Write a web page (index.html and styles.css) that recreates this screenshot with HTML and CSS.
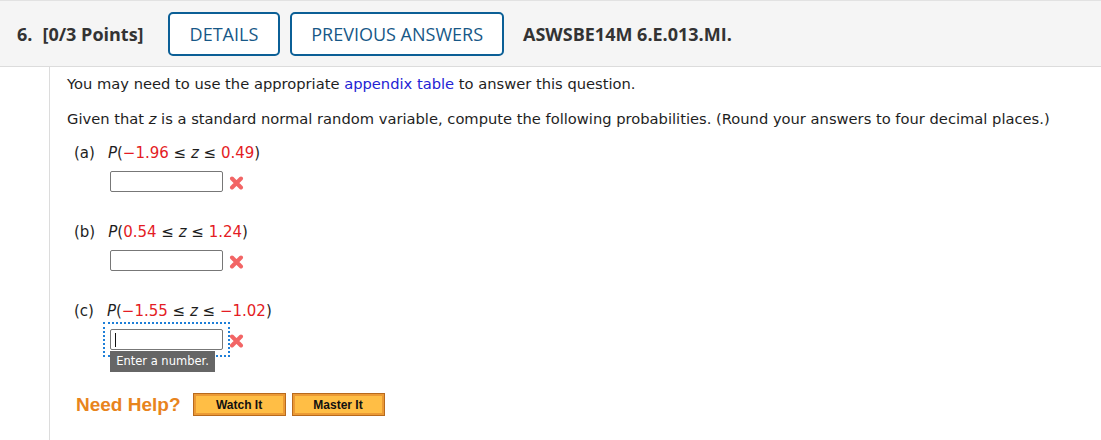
FILE: index.html
```html
<!DOCTYPE html>
<html lang="en">
<head>
    <meta charset="UTF-8">
    <meta name="viewport" content="width=device-width, initial-scale=1.0">
    <link rel="stylesheet" href="styles.css">
    <title>Question 6</title>
</head>
<body>
    <div class="question">
        <div class="qHeader">
            <span class="qNum">6.</span>
            <span class="qPoints">[0/3 Points]</span>
            <button class="tabBtn">DETAILS</button>
            <button class="tabBtn tabWide">PREVIOUS ANSWERS</button>
            <span class="qId">ASWSBE14M 6.E.013.MI.</span>
        </div>

        <div class="qBody">
            <p>You may need to use the appropriate <a href="#">appendix table</a> to answer this question.</p>
            <p>Given that <i>z</i> is a standard normal random variable, compute the following probabilities. (Round your answers to four decimal places.)</p>

            <!-- cast (a) -->
            <div class="part">
                <div class="partLabel"><span class="letter">(a)</span><i>P</i>(<span class="num">&minus;1.96</span> &le; <i>z</i> &le; <span class="num">0.49</span>)</div>
                <div class="answerRow">
                    <input type="text" class="answer">
                    <svg class="wrong" width="15" height="14" viewBox="0 0 15 14"><path d="M3 2.5 L12 11.5 M12 2.5 L3 11.5" /></svg>
                </div>
            </div>

            <!-- cast (b) -->
            <div class="part">
                <div class="partLabel"><span class="letter">(b)</span><i>P</i>(<span class="num">0.54</span> &le; <i>z</i> &le; <span class="num">1.24</span>)</div>
                <div class="answerRow">
                    <input type="text" class="answer">
                    <svg class="wrong" width="15" height="14" viewBox="0 0 15 14"><path d="M3 2.5 L12 11.5 M12 2.5 L3 11.5" /></svg>
                </div>
            </div>

            <!-- cast (c) -->
            <div class="part">
                <div class="partLabel"><span class="letter">(c)</span><i>P</i>(<span class="num">&minus;1.55</span> &le; <i>z</i> &le; <span class="num">&minus;1.02</span>)</div>
                <div class="answerRow">
                    <div class="focusWrap">
                        <input type="text" class="answer">
                        <span class="caret"></span>
                        <div class="tip">Enter a number.</div>
                    </div>
                    <svg class="wrong" width="15" height="14" viewBox="0 0 15 14"><path d="M3 2.5 L12 11.5 M12 2.5 L3 11.5" /></svg>
                </div>
            </div>

            <div class="help">
                <span class="helpText">Need Help?</span>
                <button class="helpBtn">Watch It</button>
                <button class="helpBtn">Master It</button>
            </div>
        </div>
    </div>
</body>
</html>
```

FILE: styles.css
```css
body {
    margin: 0;
    background-color: white;
    color: #1e1e1e;
    font-family: "DejaVu Sans", Verdana, sans-serif;
}

.question {
    border-top: 1px solid #e2e2e2;
    height: 439px;
}

.qHeader {
    display: flex;
    align-items: center;
    height: 65px;
    padding: 0 0 0 17px;
    background-color: #f5f5f5;
    border-bottom: 1px solid #dcdcdc;
    font-family: "Open Sans", sans-serif;
    font-size: 18px;
    color: #333;
}
.qNum {
    font-weight: 700;
    margin-right: 10px;
}
.qPoints {
    font-weight: 700;
    margin-right: 24px;
}
.tabBtn {
    height: 44px;
    padding: 0 20px;
    margin-right: 10px;
    background-color: white;
    border: 2px solid #0b5f96;
    border-radius: 5px;
    color: #175887;
    font-family: "Open Sans", sans-serif;
    font-size: 18px;
}
.tabWide {
    padding: 0 19px;
}
.qId {
    font-weight: 700;
    margin-left: 9px;
}

.qBody {
    margin-left: 49px;
    border-left: 1px solid #dcdcdc;
    padding: 7px 0 0 17px;
    height: 366px;
    font-size: 14.7px;
}
.qBody p {
    margin: 0 0 15px;
    line-height: 20px;
}
.qBody a {
    color: #2323d4;
    text-decoration: none;
}

.part {
    margin-bottom: 31px;
    margin-left: 7px;
    font-size: 15px;
}
.partLabel {
    line-height: 20px;
    margin-top: -1px;
}
.letter {
    margin-right: 13px;
}
.num {
    color: #e41c24;
}
.answerRow {
    display: flex;
    align-items: center;
    margin: 8px 0 0 36px;
}
.answer {
    width: 113px;
    height: 21px;
    box-sizing: border-box;
    border: 1px solid #777;
    border-radius: 2px;
    margin: 0;
    padding: 0;
}
.wrong {
    margin-left: 6px;
    margin-top: 3px;
}
.wrong path {
    stroke: #f26565;
    stroke-width: 4;
    stroke-linecap: round;
    fill: none;
}

.focusWrap {
    position: relative;
    display: flex;
    outline: 2px dotted #1e7fd8;
    outline-offset: 5px;
}
.caret {
    position: absolute;
    left: 5px;
    top: 4px;
    width: 1px;
    height: 14px;
    background-color: #111;
}
.tip {
    position: absolute;
    left: 0;
    top: 22px;
    width: 105px;
    height: 21px;
    line-height: 21px;
    background-color: #666;
    color: white;
    font-size: 11.5px;
    text-align: center;
}

.help {
    display: flex;
    align-items: center;
    margin: 43px 0 0 9px;
}
.helpText {
    font-family: "Liberation Sans", Arial, sans-serif;
    font-weight: bold;
    font-size: 19px;
    color: #e8841c;
    margin-right: 12px;
}
.helpBtn {
    width: 93px;
    height: 23px;
    margin-right: 6px;
    padding: 0;
    border: 1px solid #b96a1c;
    box-shadow: inset 0 0 0 2px #eb9a35;
    background: #ffbe45;
    font-family: "Liberation Sans", Arial, sans-serif;
    font-weight: bold;
    font-size: 12px;
    color: #111;
}
```
